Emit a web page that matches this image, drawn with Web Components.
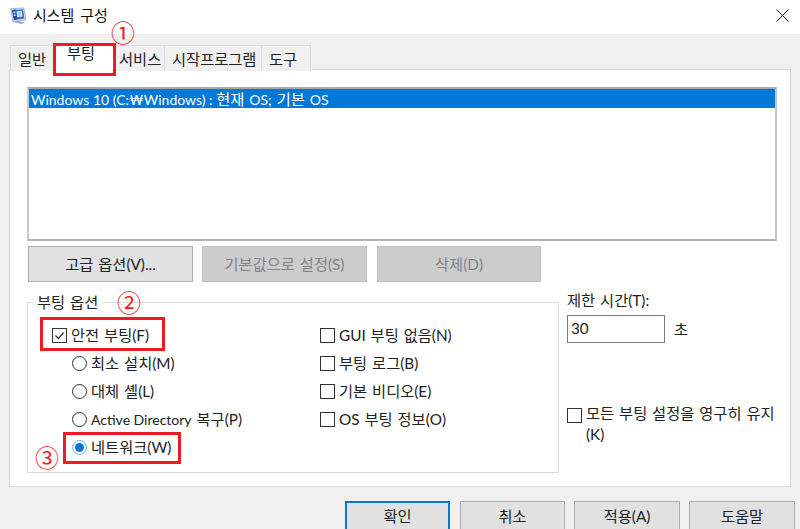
<!DOCTYPE html>
<html lang="ko">
<head>
<meta charset="utf-8">
<title>시스템 구성</title>
<style>
  html, body { margin: 0; height: 529px; overflow: hidden; background: #f0f0f0; }
  body { font: 15.3px/20px Lato, "Noto Sans CJK KR", sans-serif; color: #222; word-spacing: 1px; }

  .page { display: flex; flex-direction: column; gap: 5px; }
  .buttons { display: grid; grid-template-columns: 165px 164px 164px; column-gap: 10px; margin-left: 1px; }
  .lower { display: flex; gap: 8px; margin-top: 5px; }
  .col { display: flex; flex-direction: column; }
  .radios { padding-left: 20px; }
  .footer { display: grid; grid-template-columns: repeat(4, 105px); column-gap: 10px; padding: 14px 0 0 345px; }
  /* 라틴 글자는 한글보다 좁게 */
  .lat { font-size: 14px; word-spacing: 0; }
</style>
</head>
<body>
<msconfig-dialog heading="시스템 구성">
  <tab-strip>
    <tab-item style="width:45px;padding-left:7px">일반</tab-item>
    <tab-item active style="width:60px;padding-left:12px">부팅</tab-item>
    <tab-item style="width:50px;padding-left:4px">서비스</tab-item>
    <tab-item style="width:97px;padding-left:7px">시작프로그램</tab-item>
    <tab-item style="width:49px;padding-left:7px">도구</tab-item>
  </tab-strip>

  <tab-page>
    <div class="page">
      <os-list><os-row selected><span class="lat">Windows 10 (C:₩Windows) : </span>현재 <span class="lat">OS;</span> 기본 <span class="lat">OS</span></os-row></os-list>
      <div class="buttons">
        <win-button>고급 옵션(V)...</win-button>
        <win-button disabled style="margin-left:-1px">기본값으로 설정(S)</win-button>
        <win-button disabled>삭제(D)</win-button>
      </div>
      <div class="lower">
        <group-box legend="부팅 옵션">
          <div class="col">
            <win-check checked>안전 부팅(F)</win-check>
            <div class="col radios">
              <win-radio>최소 설치(M)</win-radio>
              <win-radio>대체 셸(L)</win-radio>
              <win-radio><span class="lat">Active Directory</span> 복구(P)</win-radio>
              <win-radio checked>네트워크(W)</win-radio>
            </div>
          </div>
          <div class="col">
            <win-check>GUI 부팅 없음(N)</win-check>
            <win-check>부팅 로그(B)</win-check>
            <win-check>기본 비디오(E)</win-check>
            <win-check>OS 부팅 정보(O)</win-check>
          </div>
        </group-box>
        <timeout-panel></timeout-panel>
      </div>
    </div>
  </tab-page>

  <div class="footer">
    <win-button tall default>확인</win-button>
    <win-button tall>취소</win-button>
    <win-button tall style="margin-left:-1px">적용(A)</win-button>
    <win-button tall style="margin-left:-1px">도움말</win-button>
  </div>

  <!-- 빨간 표시: 화면 위에 겹쳐지는 주석 -->
  <red-box style="left:53px;top:43px;width:63px;height:33px"></red-box>
  <red-box style="left:40px;top:317px;width:125px;height:34px"></red-box>
  <red-box style="left:63px;top:432px;width:118px;height:32px"></red-box>
  <red-mark style="left:123px;top:32px">①</red-mark>
  <red-mark style="left:129px;top:302px">②</red-mark>
  <red-mark style="left:47px;top:457px">③</red-mark>
</msconfig-dialog>

<script>
// 각 요소의 shadow root를 만드는 공통 함수
function shadow(el, html) {
  el.attachShadow({ mode: 'open' }).innerHTML = html;
}

class MsconfigDialog extends HTMLElement {
  connectedCallback() {
    shadow(this, `
      <style>
        :host { display: block; position: relative; height: 529px; overflow: hidden; }
        .title { display: flex; align-items: center; height: 34px; background: #fff; padding-left: 9px; }
        .title svg { flex: none; }
        .title span { margin-left: 6px; margin-top: -4px; font-size: 15px; color: #111; word-spacing: 2px; }
        .close { margin-left: auto; margin-right: 11px; display: block; }
        .body { padding-top: 10px; }
      </style>
      <div class="title">
        <svg width="18" height="18" viewBox="0 0 18 18" style="margin-top:-2px">
          <path d="M4 15 L13 17 L16 15.5 L7 13.5z" fill="#a8aab0"/>
          <path d="M1.5 1.5 L15 1 L17 13 L4 15z" fill="#d4d8de" stroke="#8d929c" stroke-width=".6"/>
          <path d="M3 3 L14 2.5 L15.4 11.6 L5 13z" fill="#2f6fd6"/>
          <path d="M3 3 L7 2.8 L8 12.6 L5 13z" fill="#1b4cae"/>
          <path d="M7.6 4.2 L12.8 3.9 L13.4 9.4 L8.3 9.9z" fill="#f4f8ff"/>
          <path d="M4.4 4.6h2v1.6h-2zM4.8 7.4h2V9h-2z" fill="#cfe0fb"/>
          <path d="M9 5.4h3v1H9zM9.2 7.4h3v1h-3z" fill="#6f9be6"/>
        </svg>
        <span>${this.getAttribute('heading')}</span>
        <svg class="close" width="13" height="13" viewBox="0 0 13 13" style="margin-top:-3px">
          <path d="M.5.5l12 12M12.5.5l-12 12" stroke="#111" stroke-width="1" fill="none"/>
        </svg>
      </div>
      <div class="body"><slot></slot></div>
    `);
  }
}

class TabStrip extends HTMLElement {
  connectedCallback() {
    shadow(this, `
      <style>
        :host { display: flex; height: 25px; padding-left: 10px; position: relative; }
      </style>
      <slot></slot>
    `);
  }
}

class TabItem extends HTMLElement {
  connectedCallback() {
    shadow(this, `
      <style>
        :host {
          display: flex; align-items: center; box-sizing: border-box;
          height: 26px; background: #f0f0f0; border: 1px solid #dcdcdc; border-bottom: 0; border-left: 0;
          white-space: nowrap; margin-top: 1px; word-spacing: 0;
        }
        :host(:first-child) { border-left: 1px solid #dcdcdc; }
        :host([active]) { background: #fff; height: 28px; margin-top: -1px; padding-bottom: 9px; position: relative; z-index: 1; }
      </style>
      <slot></slot>
    `);
  }
}

class TabPage extends HTMLElement {
  connectedCallback() {
    shadow(this, `
      <style>
        :host {
          display: block; box-sizing: border-box; margin: 0 9px; height: 418px;
          background: #fff; border: 1px solid #dcdcdc; padding: 17px 13px 0 17px;
        }
      </style>
      <slot></slot>
    `);
  }
}

class OsList extends HTMLElement {
  connectedCallback() {
    shadow(this, `
      <style>
        :host {
          display: block; box-sizing: border-box; height: 154px; background: #fff;
          border: 2px solid; border-color: #a9a9a9 #c8c8c8 #b4b4b4 #c8c8c8;
        }
      </style>
      <slot></slot>
    `);
  }
}

class OsRow extends HTMLElement {
  connectedCallback() {
    shadow(this, `
      <style>
        :host { display: block; height: 19px; line-height: 20px; padding-left: 2px; white-space: nowrap; }
        :host([selected]) { background: #0078d7; color: #fff; }
      </style>
      <slot></slot>
    `);
  }
}

class WinButton extends HTMLElement {
  connectedCallback() {
    shadow(this, `
      <style>
        :host {
          display: flex; justify-content: center; align-items: center; box-sizing: border-box;
          height: 36px; padding-bottom: 1px; background: #e1e1e1; border: 1px solid #adadad; white-space: nowrap;
        }
        :host([disabled]) { background: #cccccc; border-color: #bfbfbf; color: #838383; }
        :host([tall]) { height: 32px; margin-bottom: -4px; padding-bottom: 2px; }
        :host([default]) { border: 2px solid #0078d7; }
      </style>
      <slot></slot>
    `);
  }
}

class GroupBox extends HTMLElement {
  connectedCallback() {
    shadow(this, `
      <style>
        :host { display: block; flex: none; width: 532px; }
        fieldset { box-sizing: border-box; height: 181px; margin: 0; padding: 0; border: 1px solid #dcdcdc; }
        legend { margin-left: 5px; padding: 0 4px; line-height: 20px; }
        .cols { display: grid; grid-template-columns: 268px 1fr; padding: 9px 0 0 24px; }
      </style>
      <fieldset>
        <legend>${this.getAttribute('legend')}</legend>
        <div class="cols"><slot></slot></div>
      </fieldset>
    `);
  }
}

class WinCheck extends HTMLElement {
  connectedCallback() {
    const tick = this.hasAttribute('checked')
      ? '<svg width="13" height="13" viewBox="0 0 13 13"><path d="M2.5 6.5l3 3 5-6" stroke="#333" stroke-width="1.2" fill="none"/></svg>'
      : '';
    shadow(this, `
      <style>
        :host { display: flex; align-items: center; gap: 4px; height: 28px; white-space: nowrap; }
        .box { flex: none; box-sizing: border-box; width: 15px; height: 15px; border: 1px solid #333; background: #fff; display: block; line-height: 0; }
      </style>
      <span class="box">${tick}</span>
      <span><slot></slot></span>
    `);
  }
}

class WinRadio extends HTMLElement {
  connectedCallback() {
    shadow(this, `
      <style>
        :host { display: flex; align-items: center; gap: 4px; height: 28px; white-space: nowrap; }
        .dot { flex: none; box-sizing: border-box; width: 15px; height: 15px; border-radius: 50%; border: 1px solid #333; background: #fff; position: relative; }
        :host([checked]) .dot { border-color: #6cb2ea; }
        :host([checked]) .dot::after { content: ""; position: absolute; inset: 2px; border-radius: 50%; background: #0078d7; }
      </style>
      <span class="dot"></span>
      <span><slot></slot></span>
    `);
  }
}

class TimeoutPanel extends HTMLElement {
  connectedCallback() {
    shadow(this, `
      <style>
        :host { display: block; flex: none; width: 212px; margin-top: -2px; }
        .row { display: flex; align-items: center; gap: 9px; margin-top: 5px; }
        .input { box-sizing: border-box; width: 98px; height: 28px; border: 1px solid #7a7a7a; padding: 0 3px; line-height: 25px; }
        .keep { display: grid; grid-template-columns: 15px 1fr; column-gap: 4px; margin-top: 62px; line-height: 21px; }
        .box { box-sizing: border-box; width: 15px; height: 15px; border: 1px solid #333; margin-top: 3px; }
        .label { margin-top: -2px; }
      </style>
      <div>제한 시간(T):</div>
      <div class="row"><div class="input">30</div><span>초</span></div>
      <div class="keep"><span class="box"></span><span class="label">모든 부팅 설정을 영구히 유지 (K)</span></div>
    `);
  }
}

class RedBox extends HTMLElement {
  connectedCallback() {
    shadow(this, `
      <style>:host { position: absolute; z-index: 5; box-sizing: border-box; border: 3px solid #ed1c24; pointer-events: none; }</style>
    `);
  }
}

class RedMark extends HTMLElement {
  connectedCallback() {
    shadow(this, `
      <style>
        :host {
          position: absolute; z-index: 5; transform: translate(-50%, -50%); color: #ed1c24;
          font: 24px/24px "Noto Sans CJK KR", sans-serif; word-spacing: 0;
        }
      </style>
      <slot></slot>
    `);
  }
}

customElements.define('msconfig-dialog', MsconfigDialog);
customElements.define('tab-strip', TabStrip);
customElements.define('tab-item', TabItem);
customElements.define('tab-page', TabPage);
customElements.define('os-list', OsList);
customElements.define('os-row', OsRow);
customElements.define('win-button', WinButton);
customElements.define('group-box', GroupBox);
customElements.define('win-check', WinCheck);
customElements.define('win-radio', WinRadio);
customElements.define('timeout-panel', TimeoutPanel);
customElements.define('red-box', RedBox);
customElements.define('red-mark', RedMark);
</script>
</body>
</html>
